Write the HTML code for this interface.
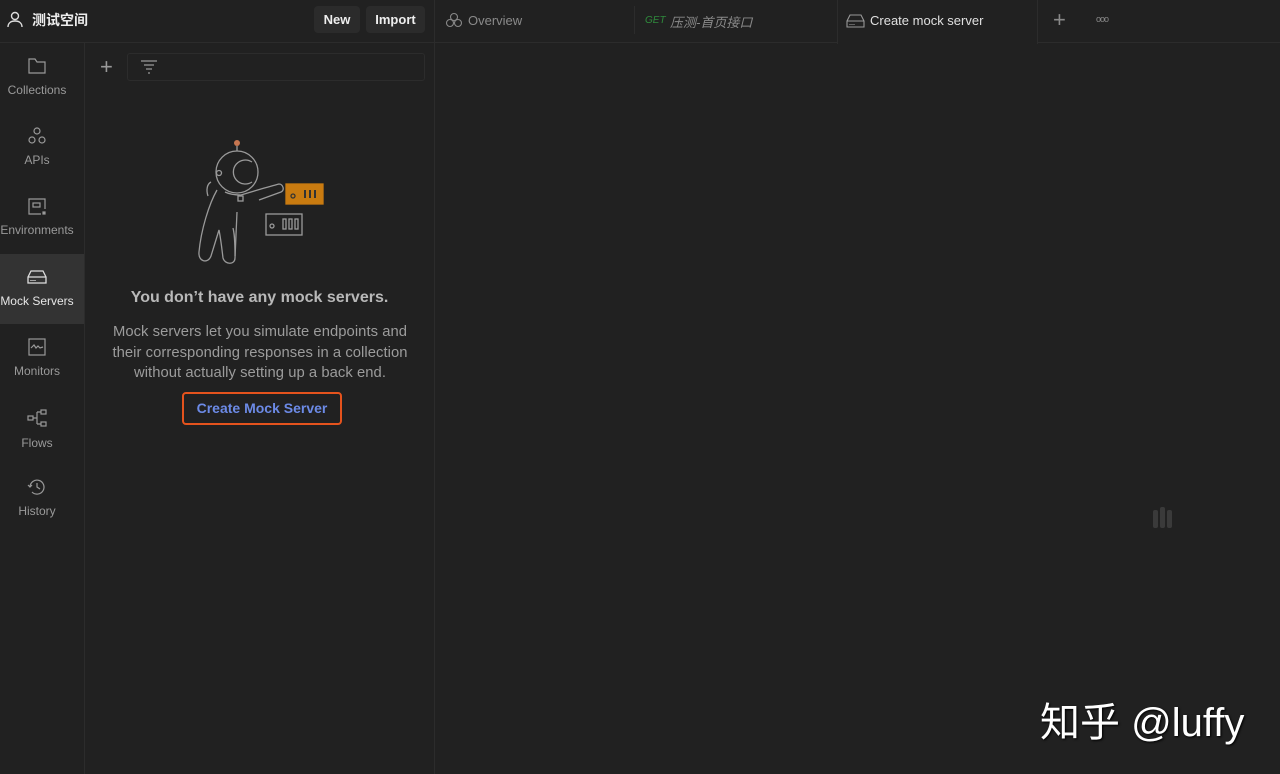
<!DOCTYPE html>
<html><head><meta charset="utf-8"><style>
*{box-sizing:border-box;margin:0;padding:0}
body{width:1280px;height:774px;background:#212121;font-family:"Liberation Sans","Noto Sans CJK SC",sans-serif;color:#c8c8c8;position:relative;overflow:hidden}
.a{position:absolute}
.sb{left:0;top:43px;width:85px;height:731px;border-right:1px solid #2c2c2c}
.item{position:absolute;left:0;width:84px;height:70px;text-align:center;font-size:12px;color:#9a9a9a}
.item svg{display:block;margin:14px 0 8px 27px}
.sel{background:#333;color:#e6e6e6}
</style></head><body>
<div class="a" style="left:0;top:0;width:1280px;height:43px;border-bottom:1px solid #2c2c2c"></div>
<svg class="a" style="left:6px;top:10px" width="18" height="18" viewBox="0 0 18 18" fill="none" stroke="#ddd" stroke-width="1.4"><circle cx="9" cy="6" r="3.5"/><path d="M2 17c0-4 3-6 7-6s7 2 7 6"/></svg>
<div class="a" style="left:32px;top:10px;font-size:14px;color:#eee;font-weight:bold">测试空间</div>
<div class="a" style="left:314px;top:6px;width:46px;height:27px;background:#2b2b2b;border-radius:4px;color:#eee;font-size:13px;font-weight:bold;text-align:center;line-height:27px">New</div>
<div class="a" style="left:366px;top:6px;width:59px;height:27px;background:#2b2b2b;border-radius:4px;color:#eee;font-size:13px;font-weight:bold;text-align:center;line-height:27px">Import</div>
<div class="a" style="left:434px;top:0;width:1px;height:774px;background:#2c2c2c"></div>
<svg class="a" style="left:445px;top:12px" width="18" height="16" viewBox="0 0 18 16" fill="none" stroke="#888" stroke-width="1.1"><circle cx="9" cy="5" r="3.5"/><circle cx="5" cy="11" r="3.5"/><circle cx="13" cy="11" r="3.5"/></svg>
<div class="a" style="left:468px;top:13px;font-size:13px;color:#8a8a8a">Overview</div>
<div class="a" style="left:634px;top:6px;width:1px;height:28px;background:#2c2c2c"></div>
<div class="a" style="left:645px;top:15px;font-size:10px;color:#2f8a3c;font-style:italic">GET</div>
<div class="a" style="left:670px;top:12px;font-size:13px;color:#8a8a8a;font-style:italic">压测-首页接口</div>
<div class="a" style="left:837px;top:0;width:201px;height:44px;background:#212121;border-left:1px solid #2c2c2c;border-right:1px solid #2c2c2c"></div>
<svg class="a" style="left:846px;top:13px" width="19" height="15" viewBox="0 0 19 15" fill="none" stroke="#999" stroke-width="1.1"><path d="M1 8L4 2h11l3 6v6H1z M1 8h17"/><path d="M4 11v1M6 11v1M8 11v1"/></svg>
<div class="a" style="left:870px;top:13px;font-size:13px;color:#e0e0e0">Create mock server</div>
<div class="a" style="left:1053px;top:7px;font-size:22px;color:#888;font-weight:300">+</div>
<div class="a" style="left:1096px;top:14px;font-size:9px;color:#888;letter-spacing:-1px">ooo</div>
<div class="a sb">
<div class="item" style="top:0"><svg width="20" height="18" viewBox="0 0 20 18" fill="none" stroke="#999" stroke-width="1.2"><path d="M2 2h6l2 3h8v11H2z"/></svg><span style="margin-left:-10px">Collections</span></div>
<div class="item" style="top:70px"><svg width="20" height="18" viewBox="0 0 20 18" fill="none" stroke="#999" stroke-width="1.2"><circle cx="10" cy="4" r="3"/><circle cx="5" cy="13" r="3"/><circle cx="15" cy="13" r="3"/></svg><span style="margin-left:-10px">APIs</span></div>
<div class="item" style="top:140px"><svg width="20" height="18" viewBox="0 0 20 18" fill="none" stroke="#999" stroke-width="1.2"><path d="M18 12V2H2v15h12"/><rect x="6" y="6" width="7" height="4"/><rect x="16" y="15" width="2" height="2" fill="#999"/></svg><span style="margin-left:-10px">Environments</span></div>
<div class="item sel" style="top:211px"><svg width="20" height="18" viewBox="0 0 20 18" fill="none" stroke="#ddd" stroke-width="1.3"><path d="M1 9L4 3h12l3 6v6H1z M1 9h18"/><path d="M4 12v1M6 12v1M8 12v1"/></svg><span style="margin-left:-10px">Mock Servers</span></div>
<div class="item" style="top:281px"><svg width="20" height="18" viewBox="0 0 20 18" fill="none" stroke="#999" stroke-width="1.2"><rect x="2" y="1" width="16" height="16"/><path d="M4 10l3-3 2 3 2-2 2 2 3-1"/></svg><span style="margin-left:-10px">Monitors</span></div>
<div class="item" style="top:351px"><svg width="22" height="20" viewBox="0 0 22 20" fill="none" stroke="#999" stroke-width="1.2"><rect x="1" y="8" width="5" height="4"/><rect x="14" y="2" width="5" height="4"/><rect x="14" y="14" width="5" height="4"/><path d="M6 10h4M10 4v12M10 4h4M10 16h4"/></svg><span style="margin-left:-10px">Flows</span></div>
<div class="item" style="top:421px"><svg width="20" height="18" viewBox="0 0 20 18" fill="none" stroke="#999" stroke-width="1.2"><path d="M3 9a7 7 0 1 1 2 5"/><path d="M1 7l2 2 2-2"/><path d="M10 5v4l3 2"/></svg><span style="margin-left:-10px">History</span></div>
</div>
<div class="a" style="left:100px;top:54px;font-size:22px;color:#999;font-weight:300">+</div>
<div class="a" style="left:127px;top:53px;width:298px;height:28px;border:1px solid #2c2c2c;border-radius:3px"></div>
<svg class="a" style="left:140px;top:59px" width="18" height="16" viewBox="0 0 18 16" stroke="#999" stroke-width="1.2"><path d="M1 2h16M4 6h10M6 10h6M8 14h2"/></svg>
<svg class="a" style="left:195px;top:138px" width="132" height="132" viewBox="0 0 132 132" fill="none" stroke="#9a9a9a" stroke-width="1.3">
<circle cx="42" cy="5" r="3" fill="#c77650" stroke="none"/>
<path d="M42 8v5"/><circle cx="42" cy="34" r="21"/><path d="M57 24a12 12 0 1 0 0 20"/><circle cx="24" cy="35" r="2.5"/>
<path d="M16 44c-4 2-5 8-3 14"/>
<path d="M22 52c-8 14-16 40-18 62-1 10 9 12 12 4l8-26c2 10 3 20 4 28 2 7 12 7 12 0l2-46"/>
<path d="M30 54c4 2 10 3 16 3l20-6c8-2 14-4 18-5 4 0 6 6 2 8l-22 8"/>
<rect x="43" y="58" width="5" height="5"/>
<path d="M38 90c2 8 2 18 2 28"/>
<rect x="91" y="46" width="37" height="20" fill="#c97b10" stroke="#c97b10"/><circle cx="98" cy="58" r="2" stroke="#333"/><path d="M110 52v8M115 52v8M120 52v8" stroke="#333" stroke-width="2"/>
<rect x="71" y="76" width="36" height="21"/><circle cx="77" cy="88" r="2"/><rect x="88" y="81" width="3" height="10"/><rect x="94" y="81" width="3" height="10"/><rect x="100" y="81" width="3" height="10"/>
</svg>
<div class="a" style="left:85px;top:289px;width:349px;text-align:center;font-size:16px;font-weight:bold;color:#b8b8b8">You don’t have any mock servers.</div>
<div class="a" style="left:60px;top:322px;width:400px;text-align:center;font-size:14.8px;line-height:20.5px;color:#9c9c9c;white-space:nowrap;letter-spacing:0.05px">Mock servers let you simulate endpoints and<br>their corresponding responses in a collection<br>without actually setting up a back end.</div>
<div class="a" style="left:182px;top:392px;width:160px;height:33px;border:2px solid #e5531d;border-radius:4px;text-align:center;line-height:29px;font-size:14px;font-weight:bold;color:#6c8ae6">Create Mock Server</div>
<div class="a" style="left:1153px;top:510px;width:5px;height:18px;background:#3a3a3a;border-radius:2px"></div>
<div class="a" style="left:1160px;top:507px;width:5px;height:21px;background:#3a3a3a;border-radius:2px"></div>
<div class="a" style="left:1167px;top:510px;width:5px;height:18px;background:#3a3a3a;border-radius:2px"></div>
<div class="a" style="left:1040px;top:690px;font-size:40px;color:#fff;text-shadow:1px 1px 2px #000">知乎 @luffy</div>
</body></html>
